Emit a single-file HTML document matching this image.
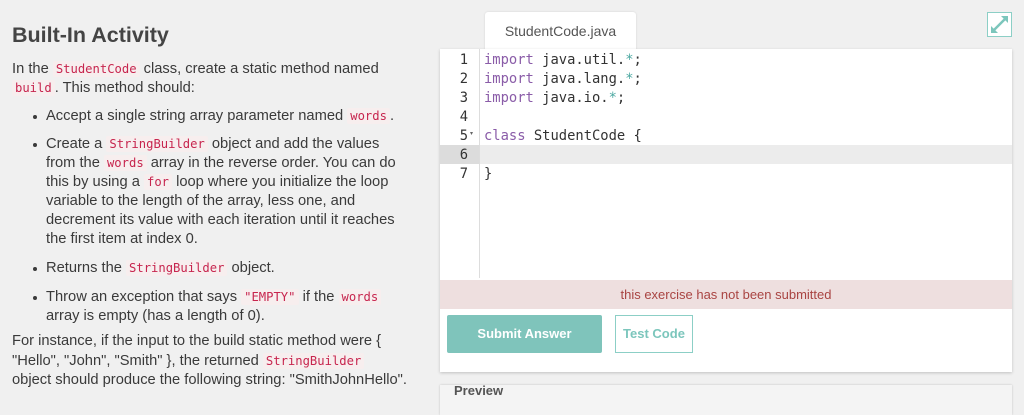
<!DOCTYPE html>
<html><head><meta charset="utf-8"><style>
body{margin:0;width:1024px;height:407px;background:#f0f0f0;font-family:"Liberation Sans",sans-serif;color:#3a3a3a;overflow:hidden;position:relative}
.l{position:absolute;white-space:nowrap;font-size:14.7px;line-height:19px}
code{font-family:"DejaVu Sans Mono",monospace;font-size:12.2px;color:#c7254e;background:#f7eeee;padding:1px 3px;border-radius:2px}
.b{position:absolute;width:4px;height:4px;border-radius:50%;background:#3a3a3a}
h1{position:absolute;left:12px;top:23px;margin:0;font-size:21.5px;font-weight:bold;color:#444}
.panel{position:absolute;left:440px;top:49px;width:572px;height:323px;background:#fff;box-shadow:0 1px 3px rgba(0,0,0,.2)}
.gut{position:absolute;left:0;top:0;width:39px;height:229px;border-right:1px solid #ddd}
.cl{position:absolute;font-family:"DejaVu Sans Mono",monospace;font-size:13.8px;line-height:19px;white-space:pre;color:#333}
.kw{color:#8a5ca8}.st{color:#4aa7a0}
</style></head><body>
<h1>Built-In Activity</h1>
<div class="l" style="left:12px;top:60px">In the <code>StudentCode</code> class, create a static method named</div>
<div class="l" style="left:12px;top:79px"><code>build</code>. This method should:</div>
<div class="b" style="left:33px;top:115px"></div>
<div class="l" style="left:46px;top:107px">Accept a single string array parameter named <code>words</code>.</div>
<div class="b" style="left:33px;top:143px"></div>
<div class="l" style="left:46px;top:135px">Create a <code>StringBuilder</code> object and add the values</div>
<div class="l" style="left:46px;top:154px">from the <code>words</code> array in the reverse order. You can do</div>
<div class="l" style="left:46px;top:173px">this by using a <code>for</code> loop where you initialize the loop</div>
<div class="l" style="left:46px;top:192px">variable to the length of the array, less one, and</div>
<div class="l" style="left:46px;top:211px">decrement its value with each iteration until it reaches</div>
<div class="l" style="left:46px;top:230px">the first item at index 0.</div>
<div class="b" style="left:33px;top:267px"></div>
<div class="l" style="left:46px;top:259px">Returns the <code>StringBuilder</code> object.</div>
<div class="b" style="left:33px;top:296px"></div>
<div class="l" style="left:46px;top:288px">Throw an exception that says <code>"EMPTY"</code> if the <code>words</code></div>
<div class="l" style="left:46px;top:307px">array is empty (has a length of 0).</div>
<div class="l" style="left:12px;top:332px">For instance, if the input to the build static method were {</div>
<div class="l" style="left:12px;top:352px">"Hello", "John", "Smith" }, the returned <code>StringBuilder</code></div>
<div class="l" style="left:12px;top:371px">object should produce the following string: "SmithJohnHello".</div>

<div style="position:absolute;left:485px;top:12px;width:151px;height:40px;background:#fff;border-radius:3px 3px 0 0;box-shadow:0 0 2px rgba(0,0,0,.12);font-size:14px;color:#555;text-align:center;line-height:38px">StudentCode.java</div>
<div style="position:absolute;left:987px;top:12px;width:25px;height:25px;border:1px solid #8ccfc6;box-sizing:border-box;background:#fff">
<svg width="23" height="23" viewBox="0 0 23 23"><g stroke="#7cc6bc" stroke-width="2.5" fill="#7cc6bc"><line x1="5" y1="18" x2="18" y2="5"/></g><polygon points="13,3 20,3 20,10" fill="#7cc6bc"/><polygon points="3,13 3,20 10,20" fill="#7cc6bc"/></svg></div>
<div class="panel">
<div class="gut"></div>
<div style="position:absolute;left:0;top:96px;width:39px;height:19px;background:#dcdcdc"></div>
<div style="position:absolute;left:40px;top:96px;width:532px;height:19px;background:#ececec"></div>
<div class="cl" style="left:0;top:2px;width:28px;text-align:right">1
2
3
4
5
6
7</div>
<div style="position:absolute;left:30px;top:81px;font-size:6px;color:#666">▾</div>
<div class="cl" style="left:44px;top:2px"><span class="kw">import</span> java.util.<span class="st">*</span>;
<span class="kw">import</span> java.lang.<span class="st">*</span>;
<span class="kw">import</span> java.io.<span class="st">*</span>;

<span class="kw">class</span> StudentCode {

}</div>
<div style="position:absolute;left:0;top:231px;width:572px;height:29px;background:#eedfdf;color:#a94442;font-size:13px;text-align:center;line-height:29px">this exercise has not been submitted</div>
<div style="position:absolute;left:7px;top:266px;width:155px;height:38px;background:#7fc4bb;border-radius:2px;color:#fff;font-size:13px;font-weight:bold;text-align:center;line-height:38px">Submit Answer</div>
<div style="position:absolute;left:175px;top:266px;width:78px;height:38px;border:1px solid #8ccfc6;box-sizing:border-box;color:#7cc6bc;font-size:13px;font-weight:bold;text-align:center;line-height:36px">Test Code</div>
</div>
<div style="position:absolute;left:440px;top:385px;width:572px;height:30px;background:#f4f4f4;box-shadow:0 0 2px rgba(0,0,0,.2);font-size:13px;color:#555;font-weight:bold;line-height:18px"><span style="position:absolute;left:14px;top:-3px">Preview</span></div>
</body></html>
